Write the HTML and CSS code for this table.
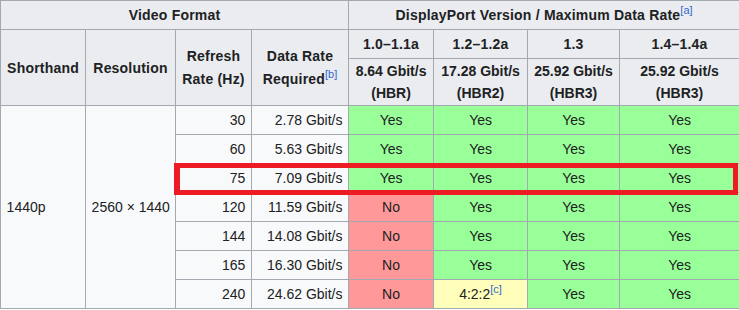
FILE: index.html
```html
<!DOCTYPE html>
<html>
<head>
<meta charset="utf-8">
<link rel="stylesheet" href="styles.css">
</head>
<body>
<div class="wrap">
<table class="wikitable">
  <colgroup>
    <col class="c1"><col class="c2"><col class="c3"><col class="c4">
    <col class="c5"><col class="c6"><col class="c7"><col class="c8">
  </colgroup>
  <thead>
    <tr>
      <th colspan="4">Video Format</th>
      <th colspan="4">DisplayPort Version / Maximum Data Rate<sup class="ref">[a]</sup></th>
    </tr>
    <tr>
      <th rowspan="2">Shorthand</th>
      <th rowspan="2">Resolution</th>
      <th rowspan="2" class="two">Refresh Rate (Hz)</th>
      <th rowspan="2" class="two">Data Rate Required<sup class="ref">[b]</sup></th>
      <th>1.0–1.1a</th>
      <th>1.2–1.2a</th>
      <th>1.3</th>
      <th>1.4–1.4a</th>
    </tr>
    <tr class="sub">
      <th>8.64 Gbit/s<br>(HBR)</th>
      <th>17.28 Gbit/s<br>(HBR2)</th>
      <th>25.92 Gbit/s<br>(HBR3)</th>
      <th>25.92 Gbit/s<br>(HBR3)</th>
    </tr>
  </thead>
  <tbody>
    <tr>
      <td rowspan="7" class="lab">1440p</td>
      <td rowspan="7" class="lab">2560 × 1440</td>
      <td class="num">30</td><td class="num">2.78 Gbit/s</td>
      <td class="yes">Yes</td><td class="yes">Yes</td><td class="yes">Yes</td><td class="yes">Yes</td>
    </tr>
    <tr>
      <td class="num">60</td><td class="num">5.63 Gbit/s</td>
      <td class="yes">Yes</td><td class="yes">Yes</td><td class="yes">Yes</td><td class="yes">Yes</td>
    </tr>
    <tr>
      <td class="num">75</td><td class="num">7.09 Gbit/s</td>
      <td class="yes">Yes</td><td class="yes">Yes</td><td class="yes">Yes</td><td class="yes">Yes</td>
    </tr>
    <tr>
      <td class="num">120</td><td class="num">11.59 Gbit/s</td>
      <td class="no">No</td><td class="yes">Yes</td><td class="yes">Yes</td><td class="yes">Yes</td>
    </tr>
    <tr>
      <td class="num">144</td><td class="num">14.08 Gbit/s</td>
      <td class="no">No</td><td class="yes">Yes</td><td class="yes">Yes</td><td class="yes">Yes</td>
    </tr>
    <tr>
      <td class="num">165</td><td class="num">16.30 Gbit/s</td>
      <td class="no">No</td><td class="yes">Yes</td><td class="yes">Yes</td><td class="yes">Yes</td>
    </tr>
    <tr>
      <td class="num">240</td><td class="num">24.62 Gbit/s</td>
      <td class="no">No</td><td class="part">4:2:2<sup class="ref">[c]</sup></td><td class="yes">Yes</td><td class="yes">Yes</td>
    </tr>
  </tbody>
</table>
<div class="highlight"></div>
</div>
</body>
</html>
```

FILE: styles.css
```css
html, body {
  margin: 0;
  padding: 0;
  background: #ffffff;
}

.wrap {
  position: relative;
  width: 739px;
}

.wikitable {
  border-collapse: collapse;
  table-layout: fixed;
  width: 739px;
  font-family: "Liberation Sans", Arial, sans-serif;
  font-size: 14px;
  color: #202122;
  background: #f8f9fa;
  border: 1px solid #a2a9b1;
}

.c1 { width: 85px; }
.c2 { width: 90px; }
.c3 { width: 76px; }
.c4 { width: 97px; }
.c5 { width: 85px; }
.c6 { width: 94px; }
.c7 { width: 92px; }
.c8 { width: 120px; }

.wikitable th,
.wikitable td {
  border: 1px solid #a2a9b1;
  padding: 3px 5.6px;
  line-height: 22px;
}

.wikitable th {
  background: #eaecf0;
  font-weight: bold;
  text-align: center;
  letter-spacing: 0.2px;
}

.wikitable th.two {
  line-height: 23px;
}

.wikitable tr.sub th {
  padding-top: 1px;
  padding-bottom: 1px;
  line-height: 22px;
  letter-spacing: 0;
}

.ref {
  font-weight: normal;
  font-size: 11px;
  line-height: 0;
  vertical-align: baseline;
  position: relative;
  top: -6px;
  letter-spacing: 0;
  color: #3366cc;
}

.lab {
  text-align: left;
  vertical-align: middle;
  white-space: nowrap;
  padding-left: 7px;
}

.num {
  text-align: right;
}

.yes,
.no,
.part {
  text-align: center;
}

.yes { background: #99ff99; }
.no { background: #ff9999; }
.part { background: #ffffbb; }

.highlight {
  position: absolute;
  left: 174px;
  top: 163px;
  width: 564px;
  height: 32px;
  box-sizing: border-box;
  border: 5px solid #ed1c24;
  border-left-width: 6px;
  pointer-events: none;
}
```
